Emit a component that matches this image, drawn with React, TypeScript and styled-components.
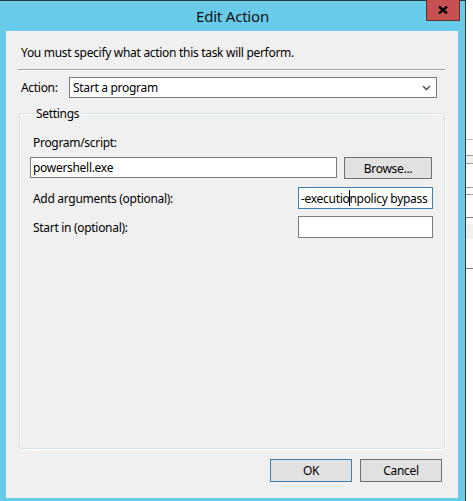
import React from "react";
import styled, { createGlobalStyle } from "styled-components";

const GlobalStyle = createGlobalStyle`
  html, body {
    margin: 0;
    padding: 0;
    height: 100%;
    overflow: hidden;
  }
  body {
    font-family: "Noto Sans", "Segoe UI", sans-serif;
    font-size: 12px;
    letter-spacing: -0.3px;
    color: #000;
  }
  #root {
    height: 100%;
  }
`;

const Page = styled.div`
  display: flex;
  height: 501px;
  width: 473px;
`;

const Window = styled.div`
  display: flex;
  flex-direction: column;
  width: 466px;
  box-sizing: border-box;
  background: #69cbea;
  border-top: 1px solid #2e3a40;
  border-right: 1px solid #2e3a40;
`;

const BackWindow = styled.div`
  flex: 1;
  background: linear-gradient(
    to bottom,
    #ffffff 0 139px,
    #c8c8c8 139px 140px,
    #ffffff 140px 155px,
    #a0a0a0 155px 156px,
    #f0f0f0 156px 163px,
    #a0a0a0 163px 164px,
    #ffffff 164px 187px,
    #a0a0a0 187px 188px,
    #ffffff 188px 194px,
    #a0a0a0 194px 195px,
    #ffffff 195px 217px,
    #808080 217px 218px,
    #ffffff 218px 224px,
    #f0f0f0 224px 239px,
    #ffffff 239px 268px,
    #808080 268px 269px,
    #ffffff 269px
  );
`;

const TitleBar = styled.div`
  display: grid;
  grid-template-columns: 1fr auto 1fr;
  height: 30px;
`;

const Title = styled.div`
  grid-column: 2;
  align-self: center;
  font-size: 15px;
  letter-spacing: -0.2px;
  line-height: 20px;
  color: #111;
`;

const CloseButton = styled.div`
  grid-column: 3;
  justify-self: end;
  align-self: start;
  margin: -1px 5px 0 0;
  width: 34px;
  height: 21px;
  box-sizing: border-box;
  background: #c75050;
  border: 1px solid #5a3030;
  border-top: none;
  display: flex;
  align-items: center;
  justify-content: center;
`;

const Client = styled.div`
  flex: 1;
  display: flex;
  flex-direction: column;
  margin: 0 7px 3px 6px;
  padding: 14px 13px 16px 12px;
  background: #f0f0f0;
`;

const Instruction = styled.div`
  margin-left: 3px;
  line-height: 15px;
`;

const Separator = styled.div`
  margin-top: 9px;
  height: 1px;
  background: #a0a0a0;
  border-bottom: 1px solid #ffffff;
`;

const ActionRow = styled.div`
  display: flex;
  align-items: center;
  margin-top: 6px;
`;

const ActionLabel = styled.div`
  width: 48px;
  margin-left: 3px;
  line-height: 15px;
`;

const Combo = styled.div`
  display: flex;
  align-items: center;
  justify-content: space-between;
  width: 368px;
  height: 21px;
  box-sizing: border-box;
  padding: 0 5px 0 3px;
  background: #fff;
  border: 1px solid #7a7a7a;
`;

const Group = styled.fieldset`
  flex: 1;
  margin: 8px 0 0 1px;
  padding: 0 11px 0 10px;
  border: 1px solid #d5dfe5;
  border-radius: 3px;
  box-shadow: inset 1px 1px 0 #fff, 1px 1px 0 #fff;
  min-width: 0;
`;

const Legend = styled.legend`
  margin-left: 4px;
  padding: 0 2px;
  line-height: 15px;
`;

const FieldLabel = styled.div<{ $top?: number }>`
  margin-top: ${(p) => p.$top ?? 0}px;
  padding-left: 3px;
  line-height: 15px;
`;

const ProgramRow = styled.div`
  display: flex;
  align-items: flex-start;
  gap: 7px;
  margin-top: 7px;
  width: 402px;
`;

const TextBox = styled.div<{ $width: number; $height?: number; $focused?: boolean }>`
  display: flex;
  align-items: center;
  width: ${(p) => p.$width}px;
  height: ${(p) => p.$height ?? 22}px;
  box-sizing: border-box;
  padding: 0 2px;
  background: #fff;
  border: 1px solid ${(p) => (p.$focused ? "#3c7fb1" : "#7a7a7a")};
  white-space: pre;
  overflow: hidden;
`;

const Caret = styled.span`
  display: inline-block;
  flex: none;
  width: 1px;
  height: 16px;
  margin-right: -1px;
  background: #000;
`;

const OptionRow = styled.div<{ $top: number }>`
  display: flex;
  align-items: center;
  justify-content: space-between;
  margin-top: ${(p) => p.$top}px;
  width: 403px;
`;

const PushButton = styled.div<{ $width: number; $height?: number; $default?: boolean }>`
  display: flex;
  align-items: center;
  justify-content: center;
  width: ${(p) => p.$width}px;
  height: ${(p) => p.$height ?? 23}px;
  box-sizing: border-box;
  background: #e1e1e1;
  border: 1px solid ${(p) => (p.$default ? "#3c7fb1" : "#707070")};
`;

const ButtonRow = styled.div`
  display: flex;
  justify-content: flex-end;
  gap: 8px;
  margin-top: 10px;
  padding-right: 3px;
`;

const App = () => {
  return (
    <>
      <GlobalStyle />
      <Page>
        <Window>
          <TitleBar>
            <Title>Edit Action</Title>
            <CloseButton>
              <svg width="10" height="8" viewBox="0 0 10 8">
                <path d="M1 0.5 L9 7.5 M9 0.5 L1 7.5" stroke="#000" strokeWidth="2.4" />
              </svg>
            </CloseButton>
          </TitleBar>
          <Client>
            <Instruction>You must specify what action this task will perform.</Instruction>
            <Separator />
            <ActionRow>
              <ActionLabel>Action:</ActionLabel>
              <Combo>
                <span>Start a program</span>
                <svg width="9" height="6" viewBox="0 0 9 6">
                  <path d="M1 1 L4.5 4.5 L8 1" stroke="#5a5a5a" strokeWidth="1.6" fill="none" />
                </svg>
              </Combo>
            </ActionRow>
            <Group>
              <Legend>Settings</Legend>
              <FieldLabel $top={14}>Program/script:</FieldLabel>
              <ProgramRow>
                <TextBox $width={307} $height={21}>powershell.exe</TextBox>
                <PushButton $width={88} $height={22}>Browse...</PushButton>
              </ProgramRow>
              <OptionRow $top={8}>
                <FieldLabel>Add arguments (optional):</FieldLabel>
                <TextBox $width={135} $focused>
                  <span>-executio</span>
                  <Caret />
                  <span>npolicy bypass</span>
                </TextBox>
              </OptionRow>
              <OptionRow $top={7}>
                <FieldLabel>Start in (optional):</FieldLabel>
                <TextBox $width={135} />
              </OptionRow>
            </Group>
            <ButtonRow>
              <PushButton $width={82} $default>OK</PushButton>
              <PushButton $width={82}>Cancel</PushButton>
            </ButtonRow>
          </Client>
        </Window>
        <BackWindow />
      </Page>
    </>
  );
};

export default App;
